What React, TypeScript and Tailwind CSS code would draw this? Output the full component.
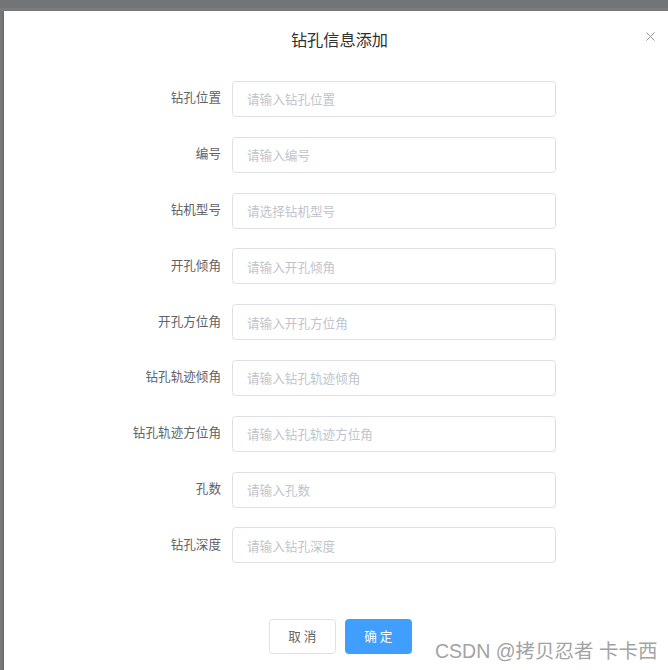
import React from 'react';

const fields = [
    { label: '钻孔位置', placeholder: '请输入钻孔位置' },
    { label: '编号', placeholder: '请输入编号' },
    { label: '钻机型号', placeholder: '请选择钻机型号' },
    { label: '开孔倾角', placeholder: '请输入开孔倾角' },
    { label: '开孔方位角', placeholder: '请输入开孔方位角' },
    { label: '钻孔轨迹倾角', placeholder: '请输入钻孔轨迹倾角' },
    { label: '钻孔轨迹方位角', placeholder: '请输入钻孔轨迹方位角' },
    { label: '孔数', placeholder: '请输入孔数' },
    { label: '钻孔深度', placeholder: '请输入钻孔深度' },
];

const font = "font-['Microsoft_YaHei','Noto_Sans_CJK_SC',sans-serif]";

const App = (): JSX.Element => {
    return (
        <div className={`relative w-[668px] h-[670px] overflow-hidden bg-[#76787a] ${font}`}>
            <div className="h-[8px] bg-[#727476]" />
            <div className="h-[3px] bg-[#7b7d7f]" />
            <div className="relative ml-[4px] w-[671px] h-[700px] bg-white shadow-[0_1px_3px_rgba(0,0,0,0.3)]">
                <div className="pt-[18px] px-[18px] pb-[9px]">
                    <div className="text-center text-[16.2px] leading-[21.6px] text-[#303133]">钻孔信息添加</div>
                </div>
                <button className="absolute top-[21px] right-[20px] w-[9px] h-[9px] text-[#909399]">
                    <svg viewBox="0 0 10 10" className="w-[9px] h-[9px]" fill="none" stroke="currentColor" strokeWidth="1.1">
                        <path d="M0.5 0.5L9.5 9.5M9.5 0.5L0.5 9.5" />
                    </svg>
                </button>

                <form className="flex flex-col gap-[19.8px] pt-[21.4px] pl-[117px]">
                    {fields.map((f) => (
                        <div key={f.label} className="flex items-center">
                            <label className="w-[111px] pr-[11px] pb-[3px] text-right text-[12.6px] leading-[20px] text-[#606266]">
                                {f.label}
                            </label>
                            <input
                                className="w-[323.5px] h-[36px] rounded-[3.6px] border border-[#dcdfe6] pl-[14px] text-[12.6px] text-[#606266] outline-none placeholder:text-[#c0c4cc]"
                                placeholder={f.placeholder}
                            />
                        </div>
                    ))}
                </form>

                <div className="flex justify-center gap-[9.5px] mt-[55.6px] pl-[1.5px]">
                    <button className="w-[66.5px] h-[35.5px] rounded-[3.6px] border border-[#dcdfe6] bg-white text-[12.6px] text-[#606266] tracking-[3px] pl-[3px]">
                        取消
                    </button>
                    <button className="w-[66.5px] h-[35.5px] rounded-[3.6px] border border-[#409eff] bg-[#409eff] text-[12.6px] text-white tracking-[3px] pl-[3px]">
                        确定
                    </button>
                </div>
            </div>

            <div className="absolute left-[435px] top-[638px] text-[19.5px] leading-[26px] text-[#a3a3a3] font-['Liberation_Sans','Noto_Sans_CJK_SC',sans-serif] whitespace-nowrap">
                CSDN @拷贝忍者 卡卡西
            </div>
        </div>
    );
};

export default App;
